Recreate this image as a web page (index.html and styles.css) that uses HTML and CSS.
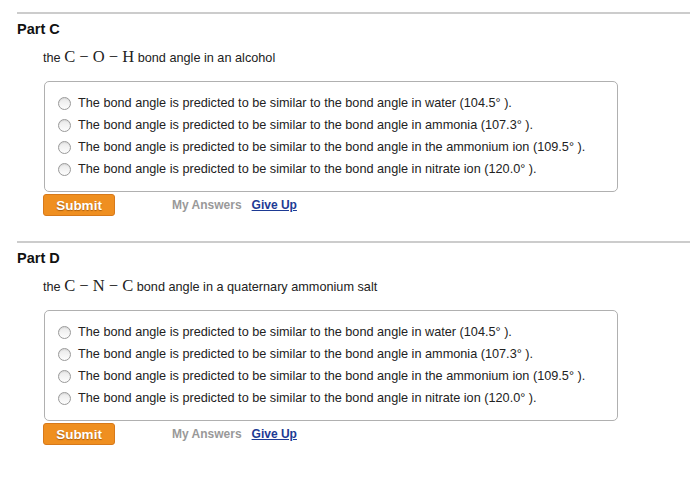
FILE: index.html
```html
<!DOCTYPE html>
<html lang="en">
<head>
    <meta charset="UTF-8">
    <title>Bond Angles</title>
    <link rel="stylesheet" href="styles.css">
</head>
<body>

    <div class="part">
        <h2 class="part-title">Part C</h2>
        <p class="question">the <span class="math">C − O − H</span> bond angle in an alcohol</p>
        <div class="choices">
            <label class="choice"><span class="radio"></span>The bond angle is predicted to be similar to the bond angle in water (104.5° ).</label>
            <label class="choice"><span class="radio"></span>The bond angle is predicted to be similar to the bond angle in ammonia (107.3° ).</label>
            <label class="choice"><span class="radio"></span>The bond angle is predicted to be similar to the bond angle in the ammonium ion (109.5° ).</label>
            <label class="choice"><span class="radio"></span>The bond angle is predicted to be similar to the bond angle in nitrate ion (120.0° ).</label>
        </div>
        <div class="actions">
            <button class="submit-btn">Submit</button>
            <span class="my-answers">My Answers</span>
            <a class="give-up" href="#">Give Up</a>
        </div>
    </div>

    <div class="part">
        <h2 class="part-title">Part D</h2>
        <p class="question">the <span class="math">C − N − C</span> bond angle in a quaternary ammonium salt</p>
        <div class="choices">
            <label class="choice"><span class="radio"></span>The bond angle is predicted to be similar to the bond angle in water (104.5° ).</label>
            <label class="choice"><span class="radio"></span>The bond angle is predicted to be similar to the bond angle in ammonia (107.3° ).</label>
            <label class="choice"><span class="radio"></span>The bond angle is predicted to be similar to the bond angle in the ammonium ion (109.5° ).</label>
            <label class="choice"><span class="radio"></span>The bond angle is predicted to be similar to the bond angle in nitrate ion (120.0° ).</label>
        </div>
        <div class="actions">
            <button class="submit-btn">Submit</button>
            <span class="my-answers">My Answers</span>
            <a class="give-up" href="#">Give Up</a>
        </div>
    </div>

</body>
</html>
```

FILE: styles.css
```css
body {
    font-family: "Liberation Sans", Arial, sans-serif;
    font-size: 12.7px;
    color: #222;
    margin: 0;
    padding: 12px 0 0 17px;
    background-color: white;
}

.part {
    border-top: 2px solid #cccccc;
    padding-top: 7px;
    padding-bottom: 25px;
}

.part-title {
    margin: 0;
    font-size: 14.5px;
    line-height: 16px;
    font-weight: bold;
    color: #111;
}

.question {
    margin: 11px 0 0 26px;
    line-height: 18px;
}

.math {
    font-family: "Liberation Serif", "Times New Roman", serif;
    font-size: 16.5px;
}

.choices {
    box-sizing: border-box;
    margin: 14px 0 0 27px;
    width: 574px;
    border: 1px solid #b0b0b0;
    border-radius: 5px;
    padding: 10px 0 11px 13px;
}

.choice {
    display: flex;
    align-items: center;
    height: 22px;
    cursor: pointer;
}

.radio {
    width: 11px;
    height: 11px;
    border: 1px solid #9a9a9a;
    border-radius: 50%;
    background: linear-gradient(#e9e9e9, #fdfdfd);
    box-shadow: inset 0 1px 1px rgba(0, 0, 0, 0.08);
    margin-right: 7px;
    flex-shrink: 0;
}

.actions {
    display: flex;
    align-items: center;
    margin: 2px 0 0 26px;
    height: 22px;
}

.submit-btn {
    width: 72px;
    height: 22px;
    padding: 0;
    font-family: "Liberation Sans", Arial, sans-serif;
    font-size: 13.5px;
    font-weight: bold;
    color: white;
    text-shadow: 0 1px 1px rgba(120, 60, 0, 0.6);
    background-color: #ef8f20;
    border: 1px solid #d7791a;
    border-radius: 3px;
    cursor: pointer;
}

.my-answers {
    margin-left: 57px;
    font-size: 12px;
    font-weight: bold;
    color: #999;
}

.give-up {
    margin-left: 10px;
    font-size: 12px;
    font-weight: bold;
    color: #1d3a94;
    text-decoration: underline;
}
```
